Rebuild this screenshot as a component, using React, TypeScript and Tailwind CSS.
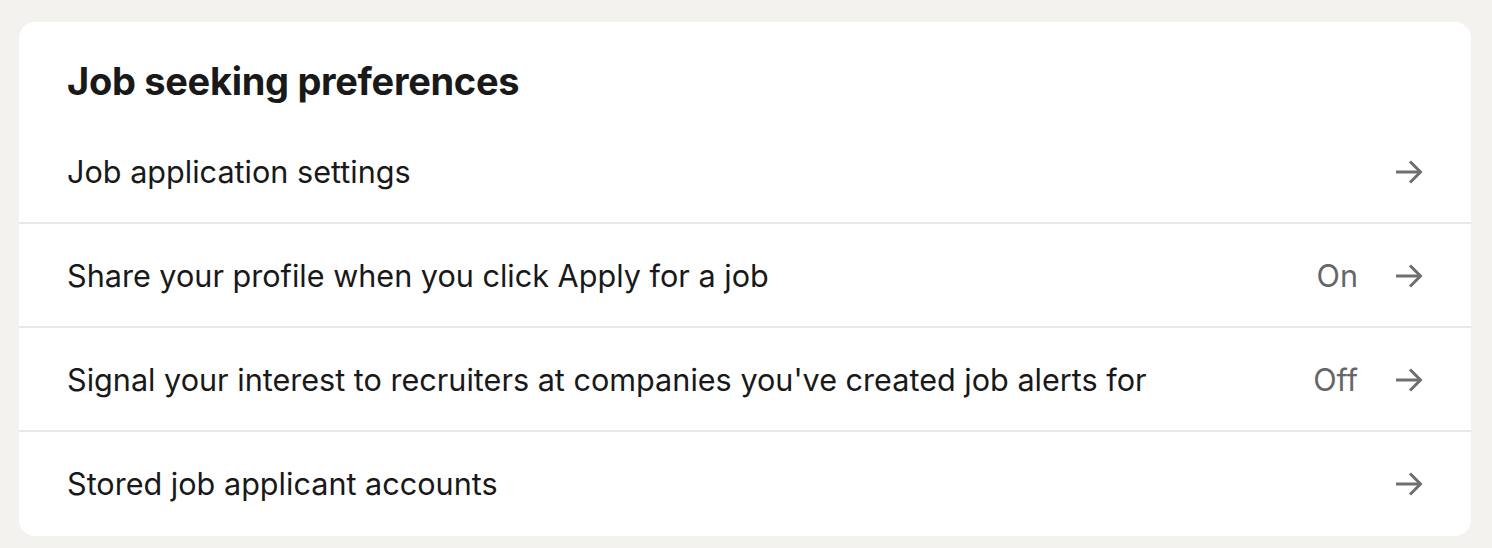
import React from 'react';

interface PrefRow {
    label: string;
    value?: string;
}

const rows: PrefRow[] = [
    { label: 'Job application settings' },
    { label: 'Share your profile when you click Apply for a job', value: 'On' },
    { label: "Signal your interest to recruiters at companies you've created job alerts for", value: 'Off' },
    { label: 'Stored job applicant accounts' },
];

const ArrowRight: React.FC = () => (
    <svg width="28" height="24" viewBox="0 0 28 24" fill="none" className="shrink-0">
        <path d="M1 12H25" stroke="#6f6f6f" strokeWidth="3" />
        <path d="M15 1.5L25.5 12L15 22.5" stroke="#6f6f6f" strokeWidth="3" />
    </svg>
);

const App: React.FC = () => {
    return (
        <div
            className="min-h-[548px] w-full bg-[#f4f2ee] pt-[22px] pl-[19px] pr-[21px] pb-[12px]"
            style={{ fontFamily: 'Inter, "Noto Sans", sans-serif' }}
        >
            <div className="bg-white rounded-[16px] pt-[36px] pb-[2px]">
                <h2 className="px-12 text-[38px] leading-[46px] font-bold text-[#191919] tracking-[-0.008em]">
                    Job seeking preferences
                </h2>

                <ul className="mt-4">
                    {rows.map((row, idx) => (
                        <li
                            key={idx}
                            className={
                                idx < rows.length - 1
                                    ? 'border-b-2 border-[#e8e8e8]'
                                    : ''
                            }
                        >
                            <a
                                href="#"
                                className="flex items-center justify-between px-12 pt-[34px] pb-[32px] text-[30.6px] leading-[36px] text-[#191919]"
                            >
                                <span>{row.label}</span>
                                <span className="flex items-center gap-[37px]">
                                    {row.value && (
                                        <span className="text-[#666666]">{row.value}</span>
                                    )}
                                    <ArrowRight />
                                </span>
                            </a>
                        </li>
                    ))}
                </ul>
            </div>
        </div>
    );
};

export default App;
